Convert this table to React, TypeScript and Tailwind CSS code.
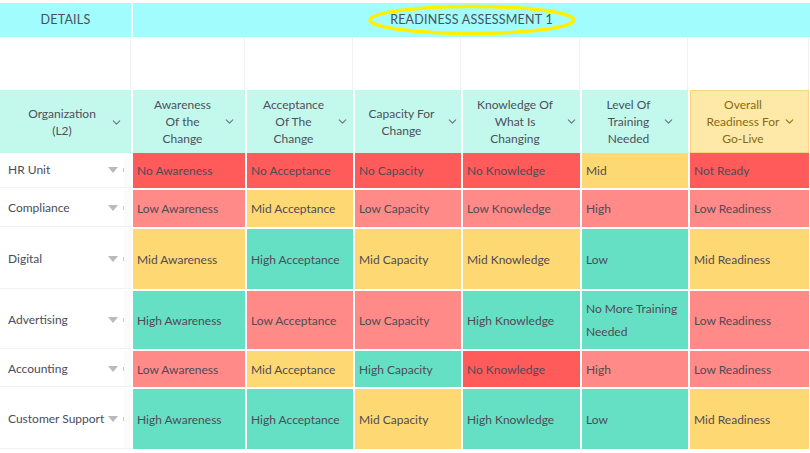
import { ChevronDown } from 'lucide-react';

type Level = 'no' | 'low' | 'mid' | 'high';

const levelClass: Record<Level, string> = {
    no: 'bg-[#ff5b5b]',
    low: 'bg-[#ff8a88]',
    mid: 'bg-[#fed973]',
    high: 'bg-[#66e0c4]',
};

const headers = [
    ['Awareness', 'Of the', 'Change'],
    ['Acceptance', 'Of The', 'Change'],
    ['Capacity For', 'Change'],
    ['Knowledge Of', 'What Is', 'Changing'],
    ['Level Of', 'Training', 'Needed'],
];

const rows: { name: string; h: string; cells: [string, Level][] }[] = [
    {
        name: 'HR Unit',
        h: 'h-[35px]',
        cells: [
            ['No Awareness', 'no'],
            ['No Acceptance', 'no'],
            ['No Capacity', 'no'],
            ['No Knowledge', 'no'],
            ['Mid', 'mid'],
            ['Not Ready', 'no'],
        ],
    },
    {
        name: 'Compliance',
        h: 'h-[37px]',
        cells: [
            ['Low Awareness', 'low'],
            ['Mid Acceptance', 'mid'],
            ['Low Capacity', 'low'],
            ['Low Knowledge', 'low'],
            ['High', 'low'],
            ['Low Readiness', 'low'],
        ],
    },
    {
        name: 'Digital',
        h: 'h-[60px]',
        cells: [
            ['Mid Awareness', 'mid'],
            ['High Acceptance', 'high'],
            ['Mid Capacity', 'mid'],
            ['Mid Knowledge', 'mid'],
            ['Low', 'high'],
            ['Mid Readiness', 'mid'],
        ],
    },
    {
        name: 'Advertising',
        h: 'h-[58px]',
        cells: [
            ['High Awareness', 'high'],
            ['Low Acceptance', 'low'],
            ['Low Capacity', 'low'],
            ['High Knowledge', 'high'],
            ['No More Training Needed', 'high'],
            ['Low Readiness', 'low'],
        ],
    },
    {
        name: 'Accounting',
        h: 'h-[36px]',
        cells: [
            ['Low Awareness', 'low'],
            ['Mid Acceptance', 'mid'],
            ['High Capacity', 'high'],
            ['No Knowledge', 'no'],
            ['High', 'low'],
            ['Low Readiness', 'low'],
        ],
    },
    {
        name: 'Customer Support',
        h: 'h-[60px]',
        cells: [
            ['High Awareness', 'high'],
            ['High Acceptance', 'high'],
            ['Mid Capacity', 'mid'],
            ['High Knowledge', 'high'],
            ['Low', 'high'],
            ['Mid Readiness', 'mid'],
        ],
    },
];

const cols = 'grid grid-cols-[131px_112px_106px_106px_117px_106px_119px] gap-x-[2px]';

const Caret = () => (
    <svg width="10" height="6" viewBox="0 0 10 6" className="shrink-0">
        <path d="M0 0 L10 0 L5 6 Z" fill="#b9b9bf" />
    </svg>
);

export default function App() {
    return (
        <div
            className="w-[810px] h-[453px] bg-white overflow-hidden pt-[3px] text-[12px] text-[#4d4f5c]"
            style={{ fontFamily: 'Lato, "Open Sans", sans-serif' }}>
            {/* Top bar */}
            <div className="flex gap-x-[2px] h-[34px]">
                <div className="w-[131px] bg-[#a0fcfd] flex items-center justify-center text-[12.5px] tracking-[0.2px] text-[#4b5058]">
                    DETAILS
                </div>
                <div className="relative flex-1 bg-[#a0fcfd] flex items-center justify-center text-[12.5px] tracking-[0.2px] text-[#4b5058]">
                    <span>READINESS ASSESSMENT 1</span>
                    <svg
                        className="absolute left-[235px] top-[1px]"
                        width="210"
                        height="32"
                        viewBox="0 0 210 32">
                        <ellipse
                            cx="104"
                            cy="16"
                            rx="102"
                            ry="13.5"
                            fill="none"
                            stroke="#fff000"
                            strokeWidth="3.5"
                        />
                    </svg>
                </div>
            </div>

            {/* Empty row */}
            <div className={`${cols} h-[53px]`}>
                {Array.from({ length: 7 }).map((_, i) => (
                    <div key={i} className="border-r border-[#f1f1f1]" />
                ))}
            </div>

            {/* Column headers */}
            <div className={`${cols} h-[63px]`}>
                <div className="bg-[#c3f9ec] flex items-center justify-center gap-[14px] pl-[20px]">
                    <div className="text-center leading-[17px]">
                        Organization
                        <br />
                        (L2)
                    </div>
                    <ChevronDown size={13} strokeWidth={2} className="text-[#6b7280] mt-[2px]" />
                </div>
                {headers.map((lines, i) => (
                    <div key={i} className="bg-[#c3f9ec] flex items-center justify-center gap-[12px] pl-[12px]">
                        <div className="text-center leading-[17px]">
                            {lines.map((l, j) => (
                                <div key={j}>{l}</div>
                            ))}
                        </div>
                        <ChevronDown size={13} strokeWidth={2} className="text-[#6b7280]" />
                    </div>
                ))}
                <div className="bg-[#fee9a8] border border-[#f6d67c] flex items-center justify-center gap-[4px] pl-[4px] text-[#8a6a10]">
                    <div className="text-center leading-[17px]">
                        <div>Overall</div>
                        <div>Readiness For</div>
                        <div>Go-Live</div>
                    </div>
                    <ChevronDown size={13} strokeWidth={2.2} className="text-[#9a7410]" />
                </div>
            </div>

            {/* Data rows */}
            <div className="flex flex-col gap-y-[2px]">
                {rows.map((r) => (
                    <div key={r.name} className={`${cols} ${r.h}`}>
                        <div className="flex items-center border-b border-[#f1f1f1]">
                            <div className="w-[123px] flex items-center justify-between pl-[8px] pr-[5px] text-[#4a4c5a]">
                                <span className="whitespace-nowrap">{r.name}</span>
                                <Caret />
                            </div>
                            <div className="w-[1px] h-[4px] bg-[#c8c8cc]" />
                            <div className="flex-1 self-stretch bg-[#fbfbfb]" />
                        </div>
                        {r.cells.map(([text, lvl], i) => (
                            <div
                                key={i}
                                className={`${levelClass[lvl]} flex items-center pl-[4px] pr-[4px] leading-[23px] text-[#504a55]`}>
                                <span>{text}</span>
                            </div>
                        ))}
                    </div>
                ))}
            </div>
        </div>
    );
}
